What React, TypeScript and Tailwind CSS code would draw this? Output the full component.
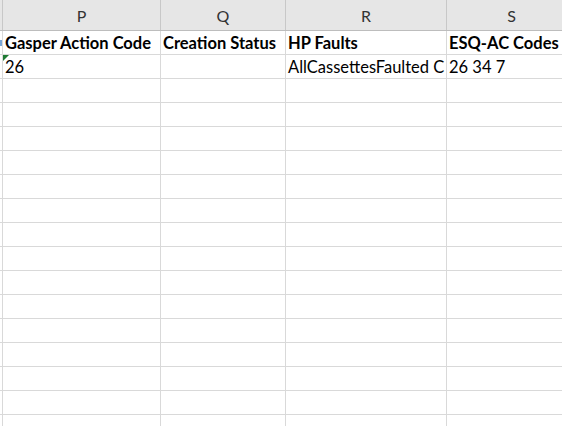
import React from "react";

const cols = [
  { letter: "", width: "w-[3px]" },
  { letter: "P", width: "w-[158px]" },
  { letter: "Q", width: "w-[125px]" },
  { letter: "R", width: "w-[161px]" },
  { letter: "S", width: "w-[130px]" },
];

const rows: string[][] = [
  ["", "Gasper Action Code", "Creation Status", "HP Faults", "ESQ-AC Codes"],
  ["", "26", "", "AllCassettesFaulted C", "26 34 7"],
];

const App = () => {
  const blank = Array.from({ length: 15 }, () => ["", "", "", "", ""]);
  const all = [...rows, ...blank];

  return (
    <div
      className="w-[562px] h-[426px] overflow-hidden bg-white text-black"
      style={{ fontFamily: "Lato, 'Liberation Sans', sans-serif" }}
    >
      {/* Column letters */}
      <div className="flex h-[31px] bg-[#e6e6e6] border-b border-[#bdbdbd]">
        {cols.map((c, i) => (
          <div
            key={i}
            className={`${c.width} shrink-0 flex items-end justify-center pb-[2px] text-[16px] text-[#333] border-r border-[#c8c8c8]`}
          >
            {c.letter}
          </div>
        ))}
      </div>

      {all.map((r, ri) => (
        <div key={ri} className="flex h-[24px] border-b border-[#d9d9d9]">
          {cols.map((c, ci) => (
            <div
              key={ci}
              className={`${c.width} shrink-0 relative overflow-hidden whitespace-nowrap border-r border-[#d9d9d9] text-[16.5px] leading-[20px] ${
                ci === 0 ? "" : "pl-[2px] pt-[2px]"
              } ${ri === 0 ? "font-bold" : ""}`}
            >
              {ci === 0 && ri === 0 && (
                <span className="absolute left-0 top-[9px] w-[2px] h-[6px] bg-[#7aa7d8]" />
              )}
              {ri === 1 && ci === 1 && (
                <span className="absolute left-0 top-0 w-0 h-0 border-t-[6px] border-t-[#1e7b34] border-r-[6px] border-r-transparent" />
              )}
              {ci === 0 ? "" : r[ci]}
            </div>
          ))}
        </div>
      ))}
    </div>
  );
};

export default App;
